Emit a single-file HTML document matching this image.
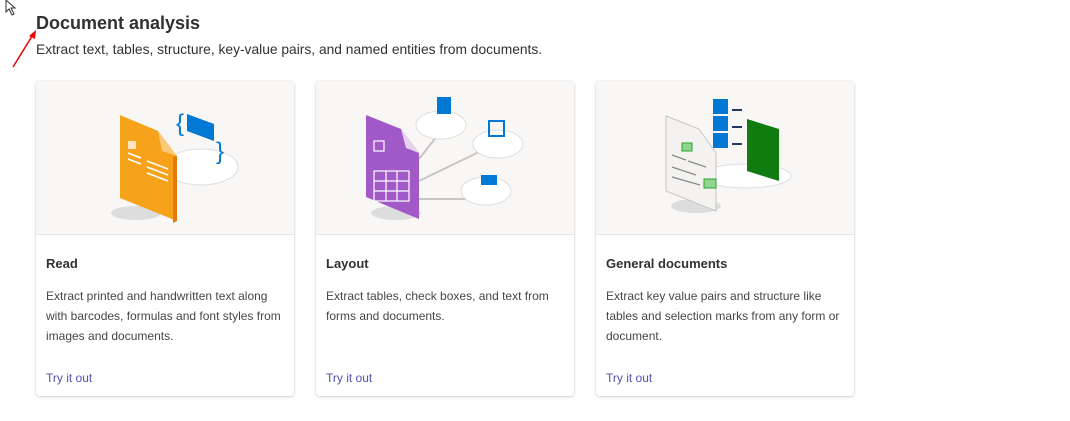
<!DOCTYPE html>
<html><head><style>
body{margin:0;width:1070px;height:421px;background:#fff;font-family:"Liberation Sans",sans-serif;position:relative;overflow:hidden;color:#323130}
h1{position:absolute;left:36px;top:13px;margin:0;font-size:18px;font-weight:600;color:#323130}
.sub{position:absolute;left:36px;top:42px;font-size:13.8px;color:#323130}
.card{position:absolute;top:81px;width:258px;height:315px;border-radius:4px;background:#fff;box-shadow:0 1px 3px rgba(0,0,0,.18),0 0 1px rgba(0,0,0,.12)}
.img{height:153px;background:#f8f7f6;border-bottom:1px solid #e8e6e4;border-radius:4px 4px 0 0;position:relative}
.t{position:absolute;left:10px;top:175px;font-size:13px;font-weight:600}
.d{position:absolute;left:10px;top:205px;white-space:nowrap;font-size:12px;line-height:20px;color:#484644}
.l{position:absolute;left:10px;top:290px;font-size:12px;color:#4f52b2}
</style></head><body>
<svg style="position:absolute;left:2px;top:0" width="20" height="18"><path d="M4 0 L4 12 L7 9 L10 15 L12 14 L9 8 L13 8 Z" fill="#fff" stroke="#333"/></svg>
<svg style="position:absolute;left:10px;top:30px" width="30" height="40"><line x1="3" y1="37" x2="24" y2="3" stroke="#e00" stroke-width="1.5"/><path d="M26 0 L19 6 L25 9Z" fill="#e00"/></svg>
<h1>Document analysis</h1>
<div class="sub">Extract text, tables, structure, key-value pairs, and named entities from documents.</div>

<div class="card" style="left:36px"><div class="img">
<svg width="258" height="153">
<ellipse cx="100" cy="132" rx="25" ry="7" fill="#ddd"/>
<ellipse cx="165" cy="86" rx="37" ry="18" fill="#fff" stroke="#ddd"/>
<path d="M84 34 L122 50 L141 75 L141 140 L84 117Z" fill="#f7a21b"/>
<path d="M122 50 L141 75 L126 70Z" fill="#fbc97a"/>
<path d="M141 75 L141 140 L137 142 L137 76Z" fill="#e57b0b"/>
<g stroke="#fff" stroke-width="1.5"><line x1="92" y1="72" x2="105" y2="77"/><line x1="92" y1="78" x2="105" y2="83"/><line x1="111" y1="80" x2="132" y2="88"/><line x1="111" y1="86" x2="132" y2="94"/><line x1="111" y1="92" x2="132" y2="100"/></g>
<rect x="92" y="60" width="8" height="8" fill="#fde5bf"/>
<path d="M151 33 L178 43 L178 60 L151 50Z" fill="#0078d4"/>
<text x="140" y="50" font-size="24" fill="#0078d4">{</text><text x="180" y="78" font-size="24" fill="#0078d4">}</text>
</svg></div>
<div class="t">Read</div><div class="d">Extract printed and handwritten text along<br>with barcodes, formulas and font styles from<br>images and documents.</div><div class="l">Try it out</div></div>

<div class="card" style="left:316px"><div class="img">
<svg width="258" height="153">
<ellipse cx="80" cy="132" rx="25" ry="7" fill="#ddd"/>
<g stroke="#c8c6c4" stroke-width="2"><line x1="103" y1="78" x2="125" y2="50"/><line x1="103" y1="100" x2="165" y2="70"/><line x1="103" y1="118" x2="150" y2="118"/></g>
<ellipse cx="125" cy="44" rx="25" ry="14" fill="#fff" stroke="#ddd"/>
<ellipse cx="182" cy="63" rx="25" ry="14" fill="#fff" stroke="#ddd"/>
<ellipse cx="170" cy="110" rx="25" ry="14" fill="#fff" stroke="#ddd"/>
<path d="M50 34 L85 48 L103 72 L103 138 L50 116Z" fill="#a259c8"/>
<path d="M85 48 L103 72 L90 67Z" fill="#e6d2f0"/>
<rect x="121" y="16" width="14" height="17" fill="#0078d4"/><rect x="173" y="40" width="15" height="15" fill="none" stroke="#0078d4" stroke-width="2"/><rect x="165" y="94" width="16" height="10" fill="#0078d4"/>
<g stroke="#fff" stroke-width="1.2" fill="none"><rect x="58" y="90" width="35" height="30"/><line x1="58" y1="100" x2="93" y2="100"/><line x1="58" y1="110" x2="93" y2="110"/><line x1="70" y1="90" x2="70" y2="120"/><line x1="81" y1="90" x2="81" y2="120"/><rect x="58" y="60" width="10" height="10"/></g>
</svg></div>
<div class="t">Layout</div><div class="d">Extract tables, check boxes, and text from<br>forms and documents.</div><div class="l">Try it out</div></div>

<div class="card" style="left:596px"><div class="img">
<svg width="258" height="153">
<ellipse cx="100" cy="125" rx="25" ry="7" fill="#ddd"/>
<ellipse cx="150" cy="95" rx="45" ry="12" fill="#fff" stroke="#ddd"/>
<path d="M70 35 L103 48 L120 72 L120 130 L70 110Z" fill="#f3f2f1" stroke="#c8c6c4"/>
<rect x="86" y="62" width="10" height="8" fill="#8fd68f" stroke="#2aa12a"/><rect x="108" y="98" width="12" height="9" fill="#8fd68f" stroke="#2aa12a"/>
<g stroke="#888" stroke-width="1.2"><line x1="76" y1="74" x2="90" y2="79"/><line x1="92" y1="80" x2="110" y2="86"/><line x1="76" y1="86" x2="100" y2="94"/><line x1="76" y1="96" x2="104" y2="104"/></g>
<rect x="117" y="18" width="15" height="15" fill="#0078d4"/><rect x="117" y="35" width="15" height="15" fill="#0078d4"/><rect x="117" y="52" width="15" height="15" fill="#0078d4"/>
<path d="M151 38 L183 48 L183 100 L151 90Z" fill="#107c10"/>
<g fill="#1f3864"><rect x="136" y="28" width="10" height="2"/><rect x="136" y="45" width="10" height="2"/><rect x="136" y="62" width="10" height="2"/></g>
</svg></div>
<div class="t">General documents</div><div class="d">Extract key value pairs and structure like<br>tables and selection marks from any form or<br>document.</div><div class="l">Try it out</div></div>
</body></html>
